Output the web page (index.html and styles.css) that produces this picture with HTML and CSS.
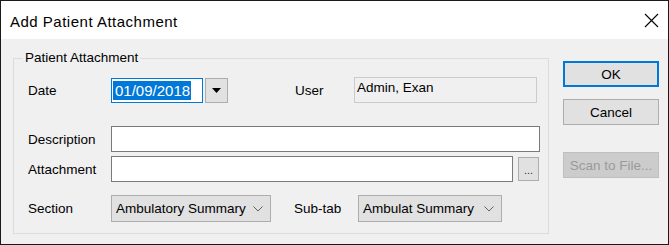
FILE: index.html
```html
<!DOCTYPE html>
<html>
<head>
<meta charset="utf-8">
<link rel="stylesheet" href="styles.css">
</head>
<body>
<div class="window">
  <div class="titlebar">
    <span class="title">Add Patient Attachment</span>
    <svg class="close" width="15" height="15" viewBox="0 0 15 15"><path d="M1 1L14 14M14 1L1 14" stroke="#000" stroke-width="1.1" fill="none"/></svg>
  </div>
  <div class="body">
    <fieldset class="group">
      <legend>Patient Attachment</legend>
      <div class="row r1">
        <span class="label">Date</span>
        <div class="input date"><span class="sel">01/09/2018</span></div>
        <div class="btn drop"><svg width="9" height="5" viewBox="0 0 9 5"><path d="M0 0H9L4.5 5Z" fill="#000"/></svg></div>
        <span class="label user-label">User</span>
        <div class="input user">Admin, Exan</div>
      </div>
      <div class="row r2">
        <span class="label">Description</span>
        <div class="input desc"></div>
      </div>
      <div class="row r3">
        <span class="label">Attachment</span>
        <div class="input attach"></div>
        <div class="btn browse">...</div>
      </div>
      <div class="row r4">
        <span class="label">Section</span>
        <div class="combo section"><span>Ambulatory Summary</span><svg width="10" height="6" viewBox="0 0 10 6"><path d="M0.5 0.5L5 5L9.5 0.5" stroke="#606060" fill="none"/></svg></div>
        <span class="label sub-label">Sub-tab</span>
        <div class="combo subtab"><span>Ambulat Summary</span><svg width="10" height="6" viewBox="0 0 10 6"><path d="M0.5 0.5L5 5L9.5 0.5" stroke="#606060" fill="none"/></svg></div>
      </div>
    </fieldset>
    <div class="buttons">
      <div class="pbtn ok">OK</div>
      <div class="pbtn cancel">Cancel</div>
      <div class="pbtn scan">Scan to File...</div>
    </div>
  </div>
</div>
</body>
</html>
```

FILE: styles.css
```css
html, body {
  margin: 0;
  padding: 0;
  background: #fff;
}
.window {
  width: 669px;
  height: 245px;
  box-sizing: border-box;
  border: 1px solid #1a1a1a;
  display: flex;
  flex-direction: column;
  font-family: "Liberation Sans", Arial, sans-serif;
  font-size: 13.5px;
  color: #000;
  overflow: hidden;
}
.titlebar {
  height: 38px;
  flex: none;
  background: #fff;
  display: flex;
  align-items: center;
  justify-content: space-between;
  padding: 0 9px 0 9px;
}
.title {
  font-size: 15px;
  letter-spacing: 0.5px;
  padding-top: 2px;
}
.close {
  display: block;
}
.body {
  flex: 1;
  background: #f0f0f0;
  display: flex;
  align-items: flex-start;
  padding-left: 12px;
}
.group {
  margin: 11px 0 0 0;
  padding: 0 0 11px 0;
  width: 536px;
  box-sizing: border-box;
  border: 1px solid #dcdcdc;
  min-width: 0;
}
.group legend {
  line-height: 16px;
  padding: 0 2px;
  margin-left: 9px;
}
.row {
  display: flex;
  align-items: center;
  padding-left: 14px;
}
.label {
  width: 83px;
  flex: none;
}
.input {
  box-sizing: border-box;
  background: #fff;
  border: 1px solid #7a7a7a;
  flex: none;
}
.r1 {
  margin-top: 11px;
}
.date {
  width: 92px;
  height: 25px;
  border-color: #0078d7;
  padding: 2px 0 0 1px;
}
.sel {
  display: inline-block;
  background: #0078d7;
  color: #fff;
  font-size: 15px;
  line-height: 19px;
  padding: 0 1px 0 2px;
}
.btn {
  box-sizing: border-box;
  background: #e1e1e1;
  border: 1px solid #adadad;
  flex: none;
  display: flex;
  align-items: center;
  justify-content: center;
}
.drop {
  width: 23px;
  height: 25px;
  margin-left: 2px;
}
.user-label {
  margin-left: 67px;
  width: 59px;
}
.user {
  width: 183px;
  height: 26px;
  background: #f0f0f0;
  border-color: #cccccc;
  padding: 2px 0 0 2px;
  line-height: 16px;
}
.r2 {
  margin-top: 23px;
}
.desc {
  width: 429px;
  height: 26px;
}
.r3 {
  margin-top: 4px;
}
.attach {
  width: 402px;
  height: 26px;
}
.browse {
  width: 21px;
  height: 24px;
  margin-left: 5px;
  align-items: flex-end;
  font-size: 11px;
  line-height: 14px;
  padding-bottom: 3px;
  color: #333;
}
.r4 {
  margin-top: 13px;
}
.combo {
  box-sizing: border-box;
  height: 27px;
  background: #e1e1e1;
  border: 1px solid #adadad;
  display: flex;
  align-items: center;
  justify-content: space-between;
  padding: 0 7px 0 4px;
  flex: none;
}
.section {
  width: 160px;
}
.sub-label {
  margin-left: 23px;
  width: 64px;
}
.subtab {
  width: 144px;
}
.buttons {
  margin-left: 14px;
  margin-top: 22px;
  display: flex;
  flex-direction: column;
  width: 96px;
}
.pbtn {
  box-sizing: border-box;
  height: 26px;
  background: #e1e1e1;
  border: 1px solid #adadad;
  display: flex;
  align-items: center;
  justify-content: center;
}
.ok {
  border: 2px solid #0078d7;
}
.cancel {
  margin-top: 12px;
}
.scan {
  margin-top: 27px;
  background: #cccccc;
  border-color: #bfbfbf;
  color: #9a9a9a;
}
```
